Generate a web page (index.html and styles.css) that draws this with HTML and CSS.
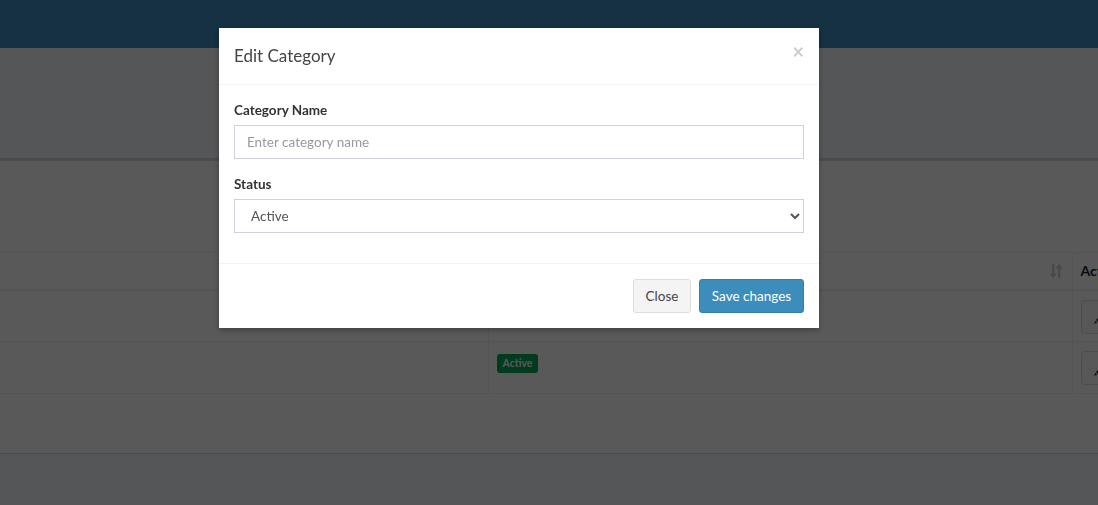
FILE: index.html
```html
<!DOCTYPE html>
<html lang="en">
<head>
    <meta charset="UTF-8">
    <meta name="viewport" content="width=device-width, initial-scale=1.0">
    <title>Categories</title>
    <link rel="stylesheet" href="styles.css">
</head>
<body>

    <!-- Top bar -->
    <div class="topbar"></div>

    <!-- Page content behind the modal -->
    <div class="content-header"></div>

    <div class="card">
        <div class="card-tools"></div>
        <table class="data-table">
            <thead>
                <tr>
                    <th class="col-name"></th>
                    <th class="col-status">
                        <svg class="sort-icon" viewBox="0 0 14 16" width="14" height="16">
                            <path d="M3 1h2.4v9.5H8L4.2 15 .4 10.500H3z"/>
                            <path d="M9 15h2.400V5.500H14L10.200 1 6.400 5.500H9z"/>
                        </svg>
                    </th>
                    <th class="col-actions">Actions</th>
                </tr>
            </thead>
            <tbody>
                <tr>
                    <td></td>
                    <td><span class="badge">Active</span></td>
                    <td>
                        <button class="btn-edit">
                            <svg viewBox="0 0 12 12" width="12" height="12"><path d="M9.500 .5l2 2L5 9 3 7zM2.500 7.800l1.700 1.700-3.200 1.500z"/></svg>
                        </button>
                    </td>
                </tr>
                <tr>
                    <td></td>
                    <td><span class="badge">Active</span></td>
                    <td>
                        <button class="btn-edit">
                            <svg viewBox="0 0 12 12" width="12" height="12"><path d="M9.500 .5l2 2L5 9 3 7zM2.500 7.800l1.700 1.700-3.200 1.500z"/></svg>
                        </button>
                    </td>
                </tr>
            </tbody>
        </table>
    </div>

    <!-- Edit modal -->
    <div class="backdrop">
        <div class="modal">
            <div class="modal-header">
                <h4>Edit Category</h4>
                <span class="modal-close">&times;</span>
            </div>
            <div class="modal-body">
                <label for="categoryName">Category Name</label>
                <input type="text" id="categoryName" placeholder="Enter category name">

                <label for="status">Status</label>
                <select id="status">
                    <option>Active</option>
                    <option>Inactive</option>
                </select>
            </div>
            <div class="modal-footer">
                <button class="btn btn-close">Close</button>
                <button class="btn btn-save">Save changes</button>
            </div>
        </div>
    </div>

</body>
</html>
```

FILE: styles.css
```css
* {
    margin: 0;
    padding: 0;
    box-sizing: border-box;
}

html, body {
    height: 100%;
    overflow: hidden;
}

body {
    font-family: "Lato", "Noto Sans", sans-serif;
    font-size: 14px;
    color: #333;
    background-color: #f4f6f9;
}

.topbar {
    height: 48px;
    background-color: #3c8dbc;
}

.content-header {
    height: 110px;
}

.card {
    height: 296px;
    background-color: #fff;
    border-top: 3px solid #d2d6de;
    border-bottom: 1px solid #d2d6de;
}

.card-tools {
    height: 91px;
}

.data-table {
    width: 1180px;
    table-layout: fixed;
    border-collapse: collapse;
}

.data-table th, .data-table td {
    border: 1px solid #f0f0f0;
    border-left: 0;
    text-align: left;
    vertical-align: top;
}

.data-table th {
    height: 37px;
    border-bottom-width: 2px;
    vertical-align: middle;
    position: relative;
    font-weight: 700;
    color: #222;
}

.data-table td {
    height: 52px;
    padding: 9px 8px 0;
}

.col-name {
    width: 488px;
}

.col-status {
    width: 584px;
}

.col-actions {
    padding-left: 8px;
}

.sort-icon {
    position: absolute;
    right: 9px;
    top: 10px;
    fill: #d0d0d0;
}

.badge {
    display: inline-block;
    margin-top: 3px;
    padding: 2px 6px 3px;
    font-size: 10.500px;
    font-weight: 700;
    line-height: 14px;
    color: #fff;
    background-color: #00a65a;
    border-radius: 3px;
}

.btn-edit {
    display: block;
    width: 40px;
    height: 34px;
    padding: 5px 0 0 11px;
    text-align: left;
    background-color: #f8f9fa;
    border: 1px solid #ddd;
    border-radius: 3px;
}

.btn-edit svg {
    display: block;
    fill: #222;
}

/* Backdrop and dialog */
.backdrop {
    position: fixed;
    top: 0;
    left: 0;
    width: 100%;
    height: 100%;
    padding-right: 60px;
    background-color: rgba(0, 0, 0, 0.65);
}

.modal {
    width: 600px;
    height: 300px;
    margin: 28px auto 0;
    background-color: #fff;
    box-shadow: 0 2px 6px rgba(0, 0, 0, 0.3);
}

.modal-header {
    display: flex;
    justify-content: space-between;
    height: 57px;
    padding: 15px;
    border-bottom: 1px solid #f4f4f4;
}

.modal-header h4 {
    font-size: 17px;
    font-weight: 400;
    line-height: 25px;
    color: #444;
}

.modal-close {
    font-size: 20px;
    font-weight: 700;
    line-height: 16px;
    color: #ccc;
}

.modal-body {
    height: 178px;
    padding: 16px 15px 0;
}

.modal-body label {
    display: block;
    height: 24px;
    font-size: 13.500px;
    font-weight: 700;
    line-height: 18px;
}

.modal-body input, .modal-body select {
    display: block;
    width: 100%;
    height: 34px;
    margin-bottom: 16px;
    font-family: inherit;
    font-size: 13.500px;
    color: #555;
    background-color: #fff;
    border: 1px solid #d2d0de;
    border-radius: 0;
}

.modal-body input {
    padding: 0 12px;
}

.modal-body input::placeholder {
    color: #999;
}

.modal-body select {
    padding: 0 12px;
}

.modal-footer {
    display: flex;
    justify-content: flex-end;
    gap: 8px;
    height: 65px;
    padding: 15px;
    border-top: 1px solid #f4f4f4;
}

.btn {
    height: 34px;
    padding: 0;
    font-family: inherit;
    font-size: 13.500px;
    white-space: nowrap;
    border-radius: 3px;
    cursor: pointer;
}

.btn-close {
    width: 58px;
    color: #444;
    background-color: #f4f4f4;
    border: 1px solid #ddd;
}

.btn-save {
    width: 105px;
    color: #fff;
    background-color: #3c8dbc;
    border: 1px solid #367fa9;
}
```
